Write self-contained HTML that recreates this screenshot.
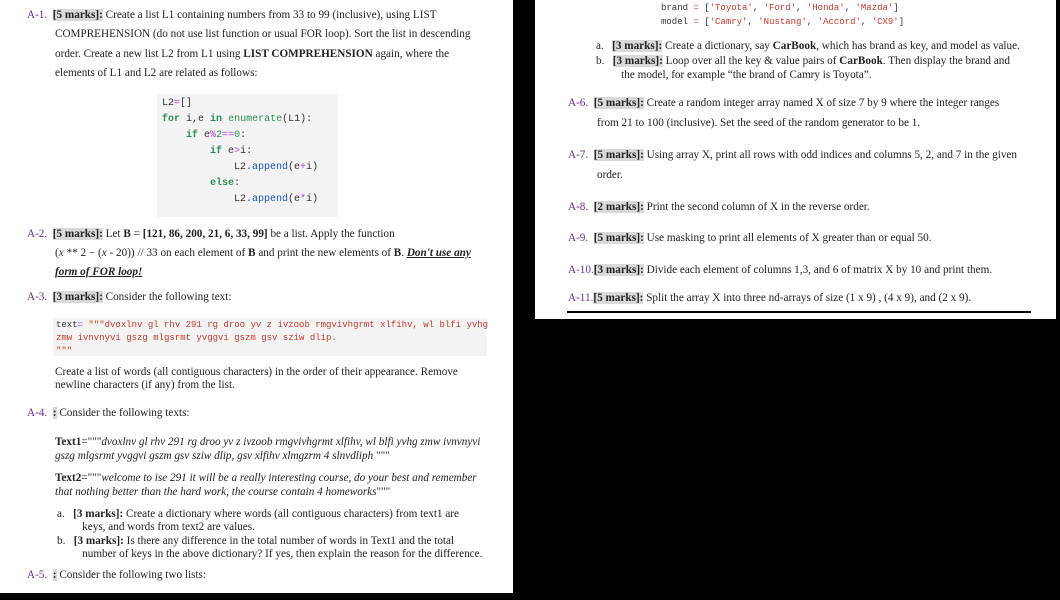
<!DOCTYPE html><html><head><style>
body{margin:0;background:#000;width:1060px;height:600px;position:relative;overflow:hidden;font-family:"Liberation Serif",serif;font-size:11.2px;color:#222}
.p{position:absolute;background:#fff}
.t{position:absolute;white-space:nowrap;line-height:14px}
.l{color:#6a2d9a}
.m{background:#d9d9d9;font-weight:bold}
.c{font-family:"Liberation Mono",monospace;font-size:10px;color:#333}
.k{color:#2e8b57;font-weight:bold}
.g{color:#2e8b57}
.b{color:#1a55a8}
.s{color:#c0392b}
.pu{color:#b040e0}
.cb{position:absolute;background:#f3f3f3}
</style></head><body>
<div class="p" style="left:0;top:0;width:513px;height:593px"></div>
<div class="p" style="left:535px;top:0;width:521px;height:319px"></div>

<div class="t" style="left:27px;top:8px"><span class="l">A-1.</span>&nbsp; <span class="m">[5 marks]:</span> Create a list L1 containing numbers from 33 to 99 (inclusive), using LIST</div>
<div class="t" style="left:55px;top:27px">COMPREHENSION (do not use list function or usual FOR loop). Sort the list in descending</div>
<div class="t" style="left:55px;top:47px">order. Create a new list L2 from L1 using <b>LIST COMPREHENSION</b> again, where the</div>
<div class="t" style="left:55px;top:66px">elements of L1 and L2 are related as follows:</div>
<div class="cb" style="left:157px;top:94px;width:181px;height:123px"></div>
<div class="t c" style="left:162px;top:96px;line-height:16px">L2<span class="pu">=</span>[]<br><span class="k">for</span> i,e <span class="k">in</span> <span class="g">enumerate</span>(L1):<br>&nbsp;&nbsp;&nbsp;&nbsp;<span class="k">if</span> e<span class="pu">%</span><span class="g">2</span><span class="pu">==</span><span class="g">0</span>:<br>&nbsp;&nbsp;&nbsp;&nbsp;&nbsp;&nbsp;&nbsp;&nbsp;<span class="k">if</span> e<span class="pu">&gt;</span>i:<br>&nbsp;&nbsp;&nbsp;&nbsp;&nbsp;&nbsp;&nbsp;&nbsp;&nbsp;&nbsp;&nbsp;&nbsp;L2.<span class="b">append</span>(e<span class="pu">+</span>i)<br>&nbsp;&nbsp;&nbsp;&nbsp;&nbsp;&nbsp;&nbsp;&nbsp;<span class="k">else</span>:<br>&nbsp;&nbsp;&nbsp;&nbsp;&nbsp;&nbsp;&nbsp;&nbsp;&nbsp;&nbsp;&nbsp;&nbsp;L2.<span class="b">append</span>(e<span class="pu">*</span>i)</div>

<div class="t" style="left:27px;top:227px"><span class="l">A-2.</span>&nbsp; <span class="m">[5 marks]:</span> Let <b>B</b> = <b>[121, 86, 200, 21, 6, 33, 99]</b> be a list. Apply the function</div>
<div class="t" style="left:55px;top:246px">(<i>x</i> ** 2 − (<i>x</i> - 20)) // 33 on each element of <b>B</b> and print the new elements of <b>B</b>. <b><i><u>Don't use any</u></i></b></div>
<div class="t" style="left:55px;top:265px"><b><i><u>form of FOR loop!</u></i></b></div>
<div class="t" style="left:27px;top:290px"><span class="l">A-3.</span>&nbsp; <span class="m">[3 marks]:</span> Consider the following text:</div>
<div class="cb" style="left:53px;top:318px;width:434px;height:38px"></div>
<div class="t c" style="left:56px;top:319px;font-size:9px;line-height:13px">text<span class="pu">=</span> <span class="s">"""dvoxlnv gl rhv 291 rg droo yv z ivzoob rmgvivhgrmt xlfihv, wl blfi yvhg<br>zmw ivnvnyvi gszg mlgsrmt yvggvi gszm gsv sziw dlip.<br>"""</span></div>
<div class="t" style="left:55px;top:366px;line-height:13px">Create a list of words (all contiguous characters) in the order of their appearance. Remove<br>newline characters (if any) from the list.</div>
<div class="t" style="left:27px;top:406px"><span class="l">A-4.</span>&nbsp; <span style="background:#d9d9d9;font-weight:bold">:</span> Consider the following texts:</div>
<div class="t" style="left:55px;top:435px;line-height:14px"><b>Text1</b>="""<i>dvoxlnv gl rhv 291 rg droo yv z ivzoob rmgvivhgrmt xlfihv, wl blfi yvhg zmw ivnvnyvi</i><br><i>gszg mlgsrmt yvggvi gszm gsv sziw dlip, gsv xlfihv xlmgzrm 4 slnvdliph</i> """</div>
<div class="t" style="left:55px;top:471px;line-height:14px"><b>Text2</b>="""<i>welcome to ise 291 it will be a really interesting course, do your best and remember</i><br><i>that nothing better than the hard work, the course contain 4 homeworks</i>"""</div>
<div class="t" style="left:57px;top:508px;line-height:13px">a.&nbsp;&nbsp; <b>[3 marks]:</b> Create a dictionary where words (all contiguous characters) from text1 are<br>&nbsp;&nbsp;&nbsp;&nbsp;&nbsp;&nbsp;&nbsp;&nbsp; keys, and words from text2 are values.</div>
<div class="t" style="left:57px;top:535px;line-height:13px">b.&nbsp;&nbsp; <b>[3 marks]:</b> Is there any difference in the total number of words in Text1 and the total<br>&nbsp;&nbsp;&nbsp;&nbsp;&nbsp;&nbsp;&nbsp;&nbsp; number of keys in the above dictionary? If yes, then explain the reason for the difference.</div>
<div class="t" style="left:27px;top:568px"><span class="l">A-5.</span>&nbsp; <span style="background:#d9d9d9;font-weight:bold">:</span> Consider the following two lists:</div>

<div class="t c" style="left:661px;top:1px;line-height:14px;font-size:9px">brand <span class="pu">=</span> [<span class="s">'Toyota'</span>, <span class="s">'Ford'</span>, <span class="s">'Honda'</span>, <span class="s">'Mazda'</span>]<br>model <span class="pu">=</span> [<span class="s">'Camry'</span>, <span class="s">'Nustang'</span>, <span class="s">'Accord'</span>, <span class="s">'CX9'</span>]</div>
<div class="t" style="left:596px;top:39px;line-height:14.5px">a.&nbsp;&nbsp; <span class="m">[3 marks]:</span> Create a dictionary, say <b>CarBook</b>, which has brand as key, and model as value.<br>b.&nbsp;&nbsp; <span class="m">[3 marks]:</span> Loop over all the key &amp; value pairs of <b>CarBook</b>. Then display the brand and<br>&nbsp;&nbsp;&nbsp;&nbsp;&nbsp;&nbsp;&nbsp;&nbsp; the model, for example “the brand of Camry is Toyota”.</div>
<div class="t" style="left:568px;top:96px"><span class="l">A-6.</span>&nbsp; <span class="m">[5 marks]:</span> Create a random integer array named X of size 7 by 9 where the integer ranges</div>
<div class="t" style="left:597px;top:116px">from 21 to 100 (inclusive). Set the seed of the random generator to be 1.</div>
<div class="t" style="left:568px;top:148px"><span class="l">A-7.</span>&nbsp; <span class="m">[5 marks]:</span> Using array X, print all rows with odd indices and columns 5, 2, and 7 in the given</div>
<div class="t" style="left:597px;top:168px">order.</div>
<div class="t" style="left:568px;top:200px"><span class="l">A-8.</span>&nbsp; <span class="m">[2 marks]:</span> Print the second column of X in the reverse order.</div>
<div class="t" style="left:568px;top:231px"><span class="l">A-9.</span>&nbsp; <span class="m">[5 marks]:</span> Use masking to print all elements of X greater than or equal 50.</div>
<div class="t" style="left:568px;top:263px"><span class="l">A-10.</span><span class="m">[3 marks]:</span> Divide each element of columns 1,3, and 6 of matrix X by 10 and print them.</div>
<div class="t" style="left:568px;top:291px"><span class="l">A-11.</span><span class="m">[5 marks]:</span> Split the array X into three nd-arrays of size (1 x 9) , (4 x 9), and (2 x 9).</div>
<div style="position:absolute;left:567px;top:311px;width:464px;height:2px;background:#000"></div>
</body></html>
